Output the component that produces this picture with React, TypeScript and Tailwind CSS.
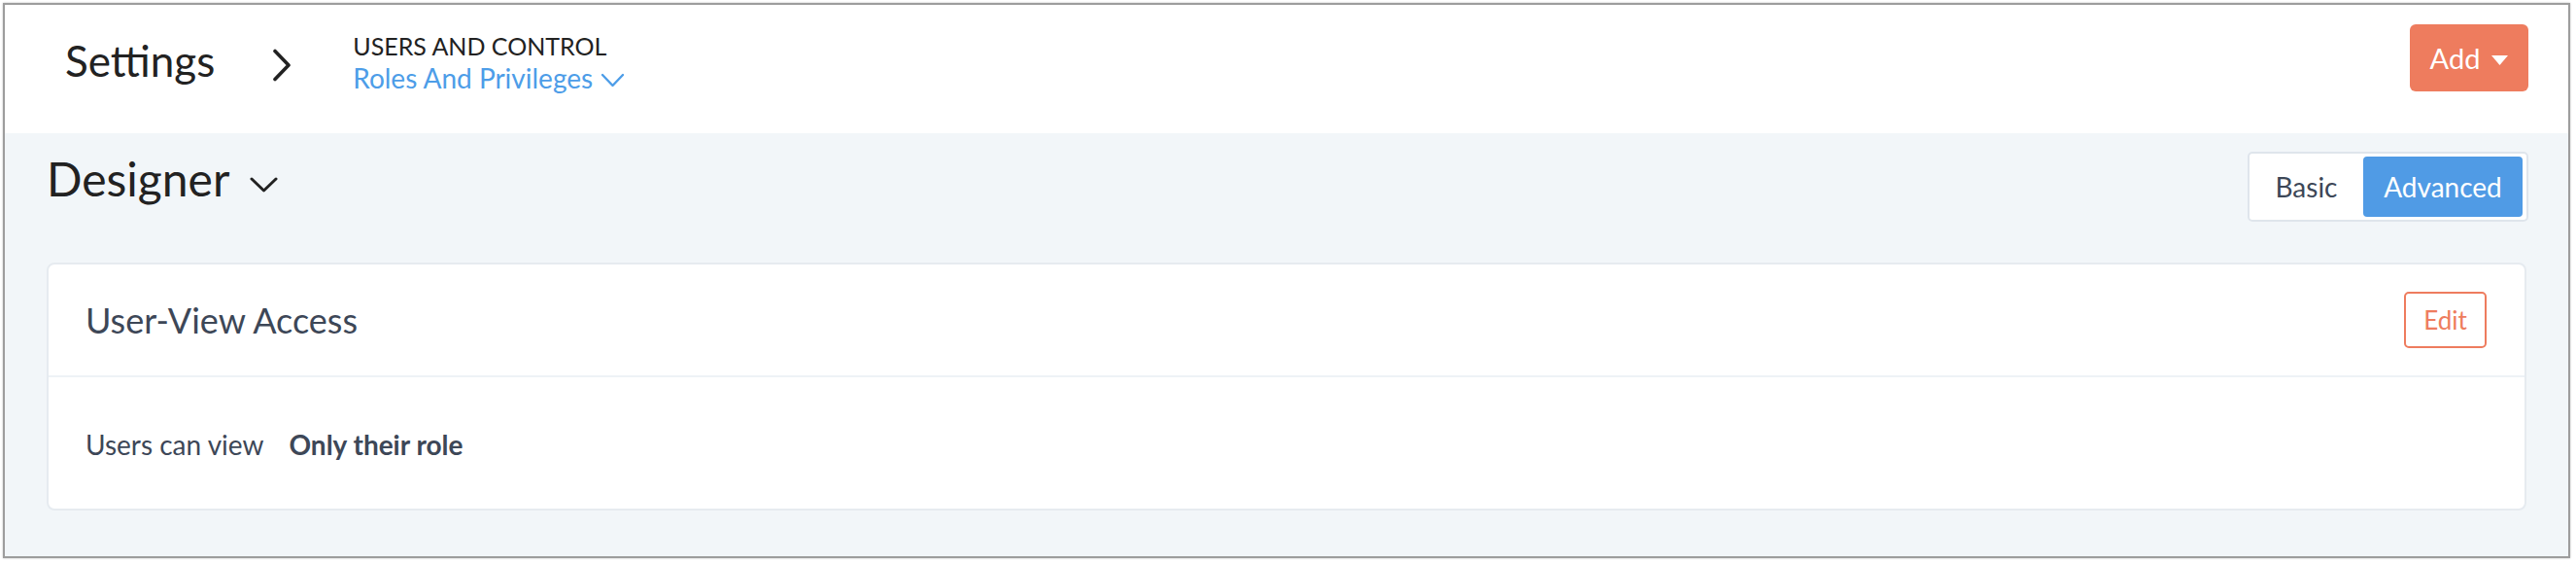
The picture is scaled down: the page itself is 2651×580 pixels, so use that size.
export default function App() {
  return (
    <div className="w-[2651px] h-[580px] bg-white pt-[3px] pl-[3px] pr-[6px] pb-[6px] font-['Lato','Liberation_Sans',sans-serif]">
      <div className="h-full border-2 border-[#9d9d9d] shadow-[0_0_2px_rgba(0,0,0,0.25)] flex flex-col bg-[#f2f6f9]">
        {/* top bar */}
        <div className="h-[132px] shrink-0 bg-white flex items-start justify-between pl-[62px] pr-[41px]">
          <div className="flex items-start">
            <h1 className="mt-[35px] text-[44px] leading-[44px] text-[#222]">Settings</h1>
            <svg width="20" height="34" viewBox="0 0 20 34" className="mt-[45px] ml-[59px]" fill="none">
              <path d="M3 2.5 17 17 3 31.5" stroke="#222" strokeWidth="3.6" strokeLinecap="round" strokeLinejoin="round" />
            </svg>
            <div className="mt-[27px] ml-[63px] flex flex-col">
              <span className="text-[25px] leading-[30px] text-[#222]">USERS AND CONTROL</span>
              <span className="flex items-center text-[28px] leading-[36px] text-[#4d9de8]">
                Roles And Privileges
                <svg width="25" height="15" viewBox="0 0 25 15" className="ml-[8px] mt-[4px]" fill="none">
                  <path d="M2 2 12.5 13 23 2" stroke="#4d9de8" strokeWidth="2.4" strokeLinecap="round" strokeLinejoin="round" />
                </svg>
              </span>
            </div>
          </div>
          <button className="mt-[20px] h-[69px] w-[122px] rounded-[6px] bg-[#ee7c5e] text-white text-[29px] flex items-center justify-center gap-[12px]">
            Add
            <svg width="17" height="10" viewBox="0 0 17 10" className="mt-[4px]">
              <path d="M0 0h17L8.5 10z" fill="white" />
            </svg>
          </button>
        </div>

        {/* content */}
        <div className="flex-1 pl-[43px] pr-[41px] pt-[19px]">
          <div className="flex justify-between items-start">
            <div className="flex items-start">
              <h2 className="text-[48px] leading-[56px] text-[#222]">Designer</h2>
              <svg width="29" height="16" viewBox="0 0 29 16" className="mt-[26px] ml-[21px]" fill="none">
                <path d="M2 2 14.5 14 27 2" stroke="#222" strokeWidth="3" strokeLinecap="round" strokeLinejoin="round" />
              </svg>
            </div>
            <div className="flex h-[72px] w-[289px] rounded-[5px] border-2 border-[#dfe5ec] bg-white py-[3px] pr-[4px]">
              <button className="flex-1 text-[28px] text-[#3d4757]">Basic</button>
              <button className="w-[164px] rounded-[4px] bg-[#509be5] text-[28px] text-white">Advanced</button>
            </div>
          </div>

          <div className="mt-[42px] mr-[2px] rounded-[8px] border-2 border-[#e6ebf0] bg-white">
            <div className="h-[116px] flex items-center justify-between pl-[38px] pr-[39px] border-b-2 border-[#eef2f6]">
              <h3 className="text-[36px] text-[#3d4757]">User-View Access</h3>
              <button className="h-[58px] w-[85px] rounded-[5px] border-2 border-[#ee7c5e] text-[26px] text-[#ee7c5e]">
                Edit
              </button>
            </div>
            <div className="h-[135px] flex items-center pl-[38px] pt-[3px] text-[28px] text-[#3d4757]">
              <span>Users can view</span>
              <span className="ml-[26px] font-bold">Only their role</span>
            </div>
          </div>
        </div>
      </div>
    </div>
  );
}
